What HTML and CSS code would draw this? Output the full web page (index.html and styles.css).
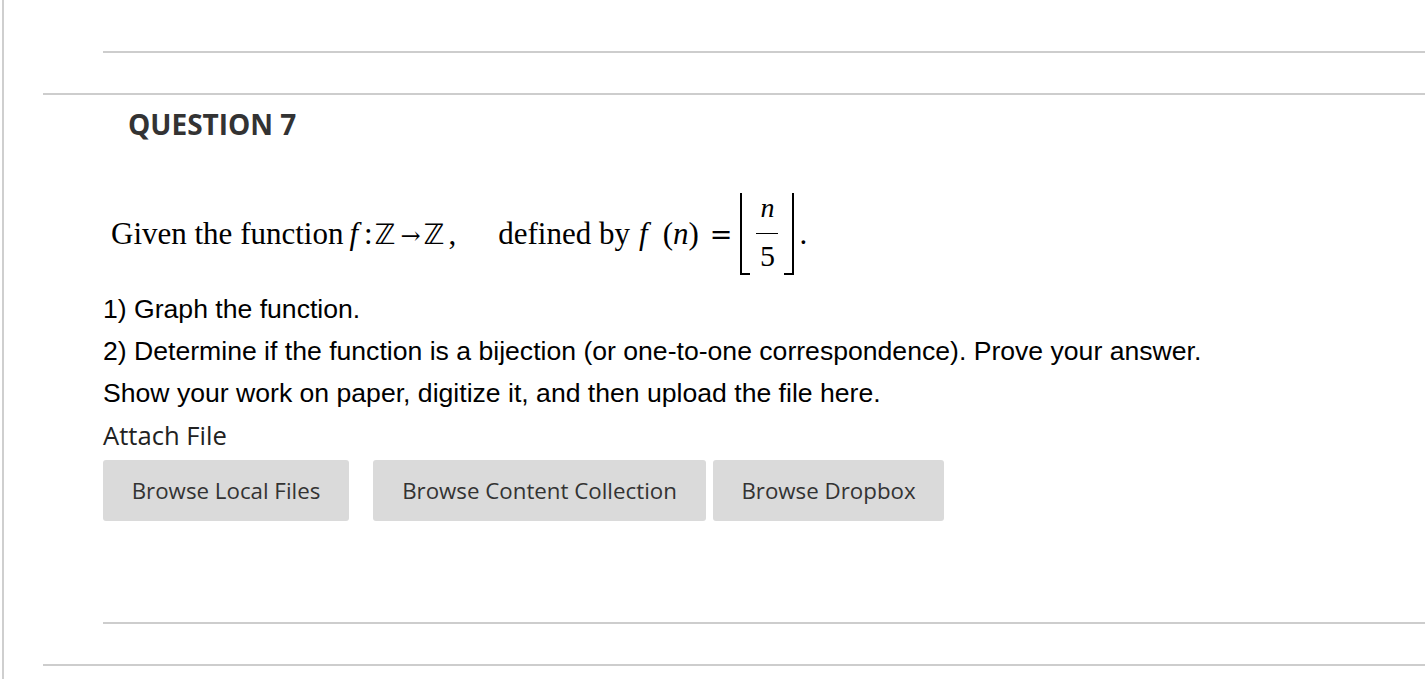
FILE: index.html
```html
<!DOCTYPE html>
<html>
<head>
<meta charset="utf-8">
<link rel="stylesheet" href="styles.css">
</head>
<body>
<div class="page">
  <div class="rule rule-inner rule-top"></div>
  <div class="rule rule-outer rule-second"></div>
  <div class="question">
    <h2 class="q-title">QUESTION 7</h2>
    <p class="math-line"><span class="lead">Given the function</span><i class="fi fi-first">f</i><span class="colon">:</span><span class="bb">ℤ</span><span class="arrow">→</span><span class="bb bb-second">ℤ</span><span class="comma">,</span><span class="words">defined by</span><i class="fi fi-second">f</i><span class="paren">(<i>n</i>)</span><span class="eq">=</span><span class="floor"><span class="lb"></span><span class="frac"><span class="num"><i>n</i></span><span class="den">5</span></span><span class="rb"></span></span><span class="dot">.</span></p>
    <p class="txt txt-first">1) Graph the function.</p>
    <p class="txt">2) Determine if the function is a bijection (or one-to-one correspondence). Prove your answer.</p>
    <p class="txt">Show your work on paper, digitize it, and then upload the file here.</p>
    <div class="attach-label">Attach File</div>
    <div class="buttons">
      <button class="btn btn-local">Browse Local Files</button>
      <button class="btn btn-content">Browse Content Collection</button>
      <button class="btn btn-dropbox">Browse Dropbox</button>
    </div>
  </div>
  <div class="rule rule-inner rule-third"></div>
  <div class="rule rule-outer rule-fourth"></div>
</div>
</body>
</html>
```
FILE: styles.css
```css
html, body {
  margin: 0;
  padding: 0;
  background: #fff;
}
.page {
  margin-left: 2px;
  border-left: 2px solid #cfcfcf;
  min-height: 679px;
  box-sizing: border-box;
  overflow: hidden;
}
.rule {
  height: 2px;
  background: #cdcdcd;
}
.rule-inner { margin-left: 99px; }
.rule-outer { margin-left: 39px; }
.rule-top { margin-top: 51px; }
.rule-second { margin-top: 40px; }
.rule-third { margin-top: 101px; }
.rule-fourth { margin-top: 40px; }

.question {
  padding-left: 99px;
}
.q-title {
  margin: 10px 0 0 25px;
  font-family: "Open Sans", sans-serif;
  font-weight: 700;
  font-size: 28px;
  line-height: 38px;
  color: #333;
}

/* math line */
.math-line {
  margin: 50px 0 0 8px;
  font-family: "Liberation Serif", "Times New Roman", serif;
  font-size: 31px;
  line-height: 30px;
  color: #000;
  white-space: nowrap;
}
.math-line i { font-style: italic; }
.fi-first { margin-left: 6px; }
.fi-second { margin-left: 9px; }
.colon { margin: 0 2px 0 6px; }
.bb {
  font-family: "DejaVu Sans", sans-serif;
  font-size: 28px;
}
.arrow {
  font-family: "DejaVu Serif", serif;
  font-size: 24px;
  margin: 0 3px 0 5px;
}
.comma { margin-left: 4px; margin-right: 42px; }
.paren { margin-left: 15px; }
.eq {
  font-family: "DejaVu Serif", serif;
  font-size: 27px;
  margin: 0 8px 0 11px;
}
.floor {
  display: inline-flex;
  overflow: hidden;
  height: 82px;
  vertical-align: -31px;
}
.lb, .rb {
  width: 8px;
  border-bottom: 2px solid #000;
}
.lb { border-left: 2px solid #000; }
.rb { border-right: 2px solid #000; }
.frac {
  display: flex;
  flex-direction: column;
  align-items: center;
  width: 34px;
  font-size: 28px;
  line-height: 28px;
}
.num {
  padding: 1px 4px 11px;
  border-bottom: 1.5px solid #000;
}
.den {
  padding-top: 8px;
  font-size: 30px;
}
.dot { margin-left: 5px; }

.txt {
  margin: 0;
  font-family: "Liberation Sans", Arial, sans-serif;
  font-size: 26.6px;
  line-height: 42px;
  color: #000;
}
.txt-first { margin-top: 13px; }
.attach-label {
  margin-top: 7px;
  font-family: "Open Sans", sans-serif;
  font-size: 25.6px;
  line-height: 30px;
  color: #222;
}
.buttons {
  display: flex;
  margin-top: 9px;
}
.btn {
  height: 61px;
  border: none;
  border-radius: 3px;
  background: #dadada;
  font-family: "Open Sans", sans-serif;
  font-size: 22.3px;
  color: #333;
  padding: 0;
}
.btn-local { width: 246px; }
.btn-content { width: 333px; margin-left: 24px; }
.btn-dropbox { width: 231px; margin-left: 7px; }
```
